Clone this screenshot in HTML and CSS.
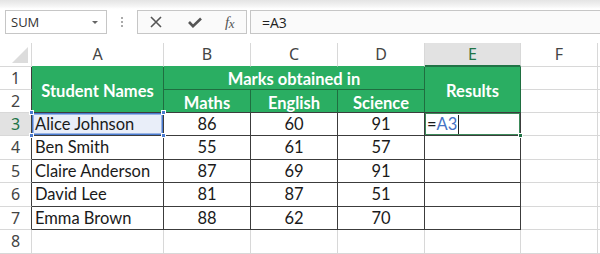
FILE: index.html
```html
<!DOCTYPE html>
<html>
<head>
<meta charset="utf-8">
<link rel="stylesheet" href="styles.css">
</head>
<body>
<div class="topbar">
  <div class="namebox"><span class="nb-text">SUM</span><span class="nb-arrow"></span></div>
  <div class="dots"><span></span><span></span><span></span></div>
  <div class="fbtns">
    <svg class="ic-x" width="12" height="12" viewBox="0 0 12 12"><path d="M1 1L11 11M11 1L1 11" stroke="#555" stroke-width="1.6" fill="none"/></svg>
    <svg class="ic-ok" width="14" height="11" viewBox="0 0 14 11"><path d="M1 5L5 9.2L13 1.5" stroke="#555" stroke-width="2.6" fill="none"/></svg>
    <span class="ic-fx">f<span class="x">x</span></span>
  </div>
  <div class="finput">=A3</div>
</div>
<div class="sheet">
  <div class="corner"><span class="tri"></span></div>
  <div class="ch">A</div>
  <div class="ch">B</div>
  <div class="ch">C</div>
  <div class="ch">D</div>
  <div class="ch sel">E</div>
  <div class="ch plain">F</div>
  <div class="ch end"></div>

  <div class="rh">1</div>
  <div class="th names">Student Names</div>
  <div class="th marks">Marks obtained in</div>
  <div class="th results">Results</div>
  <div class="gc"></div><div class="gc end"></div>

  <div class="rh">2</div>
  <div class="th sub">Maths</div>
  <div class="th sub">English</div>
  <div class="th sub">Science</div>
  <div class="gc"></div><div class="gc end"></div>

  <div class="rh sel">3</div>
  <div class="td name active">Alice Johnson<i class="h tl"></i><i class="h tr"></i><i class="h bl"></i><i class="h br"></i></div>
  <div class="td">86</div><div class="td">60</div><div class="td">91</div>
  <div class="td edit"><span class="eq">=</span><span class="ref">A3</span><span class="caret"></span><i class="fill"></i></div>
  <div class="gc"></div><div class="gc end"></div>

  <div class="rh">4</div>
  <div class="td name">Ben Smith</div>
  <div class="td">55</div><div class="td">61</div><div class="td">57</div><div class="td res"></div>
  <div class="gc"></div><div class="gc end"></div>

  <div class="rh">5</div>
  <div class="td name">Claire Anderson</div>
  <div class="td">87</div><div class="td">69</div><div class="td">91</div><div class="td res"></div>
  <div class="gc"></div><div class="gc end"></div>

  <div class="rh">6</div>
  <div class="td name">David Lee</div>
  <div class="td">81</div><div class="td">87</div><div class="td">51</div><div class="td res"></div>
  <div class="gc"></div><div class="gc end"></div>

  <div class="rh">7</div>
  <div class="td name">Emma Brown</div>
  <div class="td">88</div><div class="td">62</div><div class="td">70</div><div class="td res"></div>
  <div class="gc"></div><div class="gc end"></div>

  <div class="rh last">8</div>
  <div class="gc"></div><div class="gc"></div><div class="gc"></div><div class="gc"></div><div class="gc"></div><div class="gc"></div><div class="gc end"></div>
</div>
</body>
</html>
```
FILE: styles.css
```css
* { box-sizing: border-box; }
html, body { margin: 0; padding: 0; background: #fff; }
body { width: 600px; height: 254px; overflow: hidden; font-family: "Open Sans", "Noto Sans", sans-serif; }

.topbar {
  height: 43px;
  display: flex;
  align-items: flex-start;
  padding-top: 10px;
  background: linear-gradient(#e4e4e4 0, #f4f4f4 6px, #fff 9px, #fff 100%);
}
.namebox {
  margin-left: 5px;
  width: 102px;
  height: 24px;
  border: 1px solid #c6c6c6;
  background: #fff;
  display: flex;
  align-items: center;
  justify-content: space-between;
  padding: 0 8px 0 5px;
}
.nb-text { font-size: 13px; color: #333; }
.nb-arrow {
  width: 0; height: 0;
  border-left: 3px solid transparent;
  border-right: 3px solid transparent;
  border-top: 3px solid #666;
}
.dots {
  width: 30px;
  height: 24px;
  display: flex;
  flex-direction: column;
  align-items: center;
  justify-content: center;
  gap: 2px;
}
.dots span { width: 2px; height: 2px; background: #aaa; display: block; }
.fbtns {
  width: 110px;
  height: 24px;
  border: 1px solid #c6c6c6;
  background: #fafafa;
  display: flex;
  align-items: center;
  padding-left: 12px;
}
.ic-x { margin-right: 26px; }
.ic-ok { margin-right: 23px; }
.ic-fx { font-family: "Liberation Serif", serif; font-style: italic; font-size: 15px; color: #555; letter-spacing: -0.5px; }
.ic-fx .x { font-size: 13px; position: relative; top: 1px; }
.finput {
  margin-left: 3px;
  flex: 1;
  height: 24px;
  border: 1px solid #c6c6c6;
  border-right: none;
  background: #fafafa;
  font-size: 14px;
  color: #222;
  padding: 2px 0 0 11px;
}

.sheet {
  display: grid;
  grid-template-columns: 32px 132px 87px 87px 87px 96px 77px 2px;
  grid-template-rows: 24px 23px 23px 23px 24px 23px 24px 23px 24px;
}
.sheet > div { border-right: 1px solid #d8d8d8; border-bottom: 1px solid #d8d8d8; position: relative; }
.sheet > div.end { border-right: none; }

.corner { background: #fff; }
.corner .tri {
  position: absolute; right: 3px; bottom: 3px;
  width: 0; height: 0;
  border-left: 16px solid transparent;
  border-bottom: 16px solid #dcdcdc;
}
.ch {
  font-family: "Noto Sans", sans-serif;
  font-size: 16px;
  color: #444;
  text-align: center;
  line-height: 23px;
  background: #fff;
  border-bottom-color: #2aae62 !important;
}
.ch.plain { border-bottom-color: #d8d8d8 !important; }
.ch.end { border-bottom-color: #d8d8d8 !important; }
.ch.sel { background: #e2e2e2; color: #217346; border-bottom: 2px solid #217346 !important; line-height: 23px; }
.rh {
  font-family: "Noto Sans", sans-serif;
  font-size: 16px;
  color: #444;
  text-align: center;
  line-height: 23px;
  border-right-color: #3c3c3c !important;
}
.rh.last { border-right-color: #d8d8d8 !important; }
.rh.sel { background: #e2e2e2; color: #217346; }

.th {
  background: #2aae62;
  color: #fff;
  font-family: "Lato", sans-serif;
  font-weight: bold;
  font-size: 16.5px;
  display: flex;
  align-items: center;
  justify-content: center;
  padding-top: 2px;
  border-right: 1px solid #1f6e40 !important;
  border-bottom: 1px solid #1f6e40 !important;
}
.th.names { grid-row: span 2; padding-top: 3px; }
.th.marks { grid-column: span 3; }
.th.results { grid-row: span 2; padding-top: 3px; border-bottom-color: #3c3c3c !important; }
.th.sub { border-bottom-color: #3c3c3c !important; padding-top: 3px; }
.th.names { border-bottom-color: #3c3c3c !important; }

.td {
  font-family: "Lato", sans-serif;
  font-size: 16.5px;
  color: #1a1a1a;
  text-align: center;
  line-height: 23px;
  border-right-color: #3c3c3c !important;
  border-bottom-color: #3c3c3c !important;
}
.td.name { text-align: left; padding-left: 3px; }
.td.active { background: #e9eef9; box-shadow: inset 0 0 0 1.5px #4a7bd0; }
.h { position: absolute; width: 5px; height: 5px; background: #4a7bd0; border: 1px solid #fff; z-index: 2; }
.h.tl { left: -3px; top: -3px; }
.h.tr { right: -3px; top: -3px; }
.h.bl { left: -3px; bottom: -3px; }
.h.br { right: -3px; bottom: -3px; }
.td.edit { text-align: left; padding-left: 2px; box-shadow: inset 0 0 0 1px #3d8a5a; display: flex; align-items: center; line-height: 1; }
.eq { color: #1a1a1a; }
.ref { color: #4472c4; }
.caret { width: 1px; height: 19px; background: #222; margin-left: 1px; }
.fill { position: absolute; right: -3px; bottom: -3px; width: 5px; height: 5px; background: #217346; border: 1px solid #fff; z-index: 2; }
.gc { background: #fff; }
```
